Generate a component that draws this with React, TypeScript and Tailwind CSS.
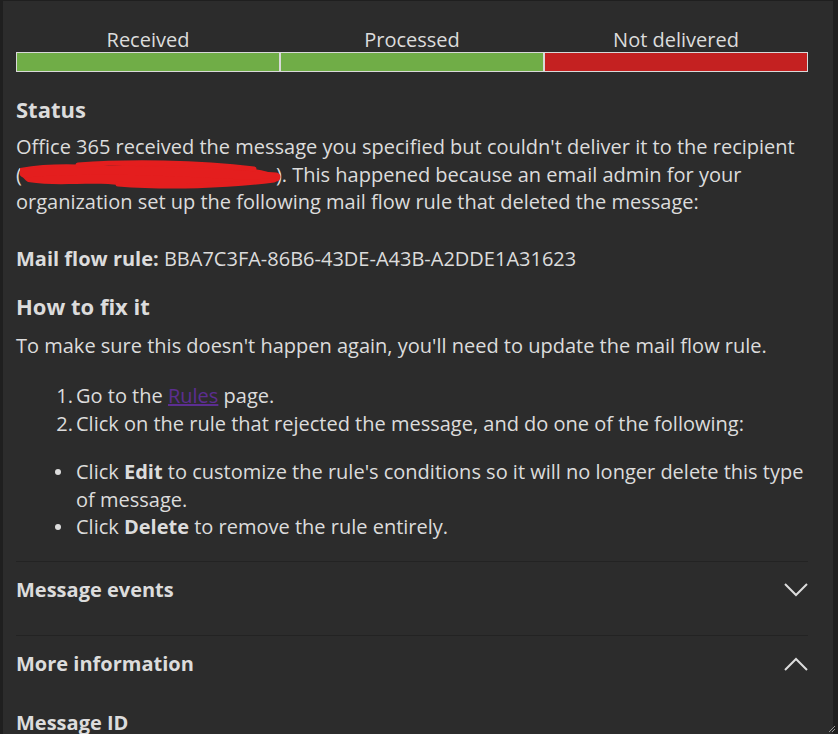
import React from 'react';

const font = { fontFamily: '"Open Sans", "Noto Sans", sans-serif' };

const Chevron: React.FC<{ up?: boolean }> = ({ up }) => (
  <svg width="24" height="14" viewBox="0 0 24 14" className="text-[#dcdcdc]">
    <path
      d={up ? 'M1 13 L12 2 L23 13' : 'M1 1 L12 12 L23 1'}
      fill="none"
      stroke="currentColor"
      strokeWidth="2"
    />
  </svg>
);

const Redaction = () => (
  <span className="relative inline-block w-[254px] h-[20px] align-middle">
    <svg
      width="268"
      height="30"
      viewBox="0 0 268 30"
      className="absolute left-[-4px] top-[-6px]"
    >
      <path
        d="M2 8 C30 3 60 4 90 6 C120 4 150 2 190 5 C215 6 235 8 250 12 L262 18 C240 22 210 26 180 25 C150 24 120 27 90 24 C60 23 35 26 10 22 C4 18 2 13 2 8 Z"
        fill="#e41e1e"
      />
      <path d="M6 13 C60 8 150 10 258 17" stroke="#e41e1e" strokeWidth="9" fill="none" strokeLinecap="round" />
      <path d="M60 5 C110 1 180 2 236 9" stroke="#e41e1e" strokeWidth="5" fill="none" strokeLinecap="round" />
      <path d="M100 24 C150 28 210 26 256 20" stroke="#e41e1e" strokeWidth="5" fill="none" strokeLinecap="round" />
    </svg>
  </span>
);

export default function App() {
  return (
    <div
      className="relative h-[734px] overflow-hidden bg-[#1f1f1f] text-[#dcdcdc] text-[20px] leading-[27.5px]"
      style={font}
    >
      <div className="ml-[3px] mt-[1px] mr-[5px] h-[733px] bg-[#2c2c2c] pl-[13px] pr-[25px]">
        {/* progress */}
        <div className="grid grid-cols-3 pt-[27px] text-center leading-[24px]">
          <span>Received</span>
          <span>Processed</span>
          <span>Not delivered</span>
        </div>
        <div className="grid grid-cols-3 h-[20px]">
          <div className="border border-[#d9d9d9] bg-[#70ad47]" />
          <div className="border border-[#d9d9d9] bg-[#70ad47]" />
          <div className="border border-[#d9d9d9] bg-[#c42121]" />
        </div>

        <h2 className="mt-[23px] text-[22px] font-bold leading-[28px]">Status</h2>
        <p className="mt-[10px]">
          Office 365 received the message you specified but couldn't deliver it to the recipient
          <br />
          (<Redaction />). This happened because an email admin for your
          <br />
          organization set up the following mail flow rule that deleted the message:
        </p>
        <p className="mt-[29.5px]">
          <span className="font-bold">Mail flow rule:</span> BBA7C3FA-86B6-43DE-A43B-A2DDE1A31623
        </p>

        <h2 className="mt-[19px] text-[22px] font-bold leading-[28px]">How to fix it</h2>
        <p className="mt-[12px]">
          To make sure this doesn't happen again, you'll need to update the mail flow rule.
        </p>

        <ol className="mt-[23px]">
          <li className="flex">
            <span className="w-[60px] shrink-0 pr-[3px] text-right">1.</span>
            <span>
              Go to the <a className="text-[#5c2e91] underline">Rules</a> page.
            </span>
          </li>
          <li className="flex">
            <span className="w-[60px] shrink-0 pr-[3px] text-right">2.</span>
            <span>Click on the rule that rejected the message, and do one of the following:</span>
          </li>
        </ol>

        <ul className="mt-[21px]">
          <li className="flex">
            <span className="w-[60px] shrink-0 pt-[11px] pl-[39px]">
              <span className="block h-[6px] w-[6px] rounded-full bg-[#dcdcdc]" />
            </span>
            <span>
              Click <b>Edit</b> to customize the rule's conditions so it will no longer delete this type
              <br />
              of message.
            </span>
          </li>
          <li className="flex">
            <span className="w-[60px] shrink-0 pt-[11px] pl-[39px]">
              <span className="block h-[6px] w-[6px] rounded-full bg-[#dcdcdc]" />
            </span>
            <span>
              Click <b>Delete</b> to remove the rule entirely.
            </span>
          </li>
        </ul>

        <div className="mt-[20px] border-t border-[#232323]">
          <div className="flex items-center justify-between pt-[14px] pb-[31px]">
            <span className="text-[20px] font-bold leading-[28px]">Message events</span>
            <Chevron />
          </div>
        </div>
        <div className="border-t border-[#232323]">
          <div className="flex items-center justify-between pt-[14px]">
            <span className="text-[20px] font-bold leading-[28px]">More information</span>
            <Chevron up />
          </div>
          <div className="mt-[31px] text-[20px] font-bold leading-[28px]">Message ID</div>
        </div>
      </div>
      <svg width="8" height="8" viewBox="0 0 8 8" className="absolute right-[2px] bottom-[1px]">
        <path d="M1 7 L7 1 M4 7 L7 4" stroke="#9a9a9a" strokeWidth="1" />
      </svg>
    </div>
  );
}
